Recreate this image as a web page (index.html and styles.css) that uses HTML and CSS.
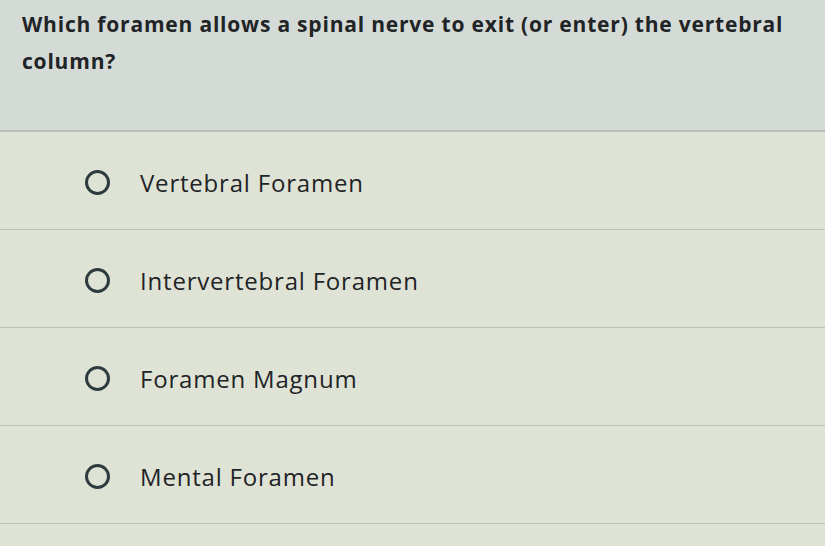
FILE: index.html
```html
<!DOCTYPE html>
<html lang="en">
<head>
    <meta charset="UTF-8">
    <title>Question</title>
    <link rel="stylesheet" href="styles.css">
</head>
<body>
    <div class="question">
        <p>Which foramen allows a spinal nerve to exit (or enter) the vertebral column?</p>
    </div>
    <ul class="answers">
        <li><label><span class="radio"></span>Vertebral Foramen</label></li>
        <li><label><span class="radio"></span>Intervertebral Foramen</label></li>
        <li><label><span class="radio"></span>Foramen Magnum</label></li>
        <li><label><span class="radio"></span>Mental Foramen</label></li>
    </ul>
</body>
</html>
```

FILE: styles.css
```css
body {
    margin: 0;
    font-family: 'Open Sans', 'Liberation Sans', sans-serif;
    background: #dfe3d6;
    color: #1f2426;
}
.question {
    background: #d4dad5;
    padding: 6px 30px 0 22px;
    height: 124px;
    border-bottom: 2px solid #b9bdb6;
}
.question p {
    margin: 0;
    font-size: 21px;
    font-weight: 700;
    line-height: 37px;
    letter-spacing: 0.8px;
}
.answers {
    list-style: none;
    margin: 0;
    padding: 0;
}
.answers li {
    height: 97px;
    border-bottom: 1px solid #bcc0b8;
    display: flex;
    align-items: center;
    padding-left: 85px;
}
.answers label {
    display: flex;
    align-items: center;
    gap: 30px;
    font-size: 24px;
    letter-spacing: 0.8px;
    padding-top: 4px;
}
.radio {
    width: 19px;
    height: 19px;
    border: 3px solid #2d3b3f;
    border-radius: 50%;
}
```
